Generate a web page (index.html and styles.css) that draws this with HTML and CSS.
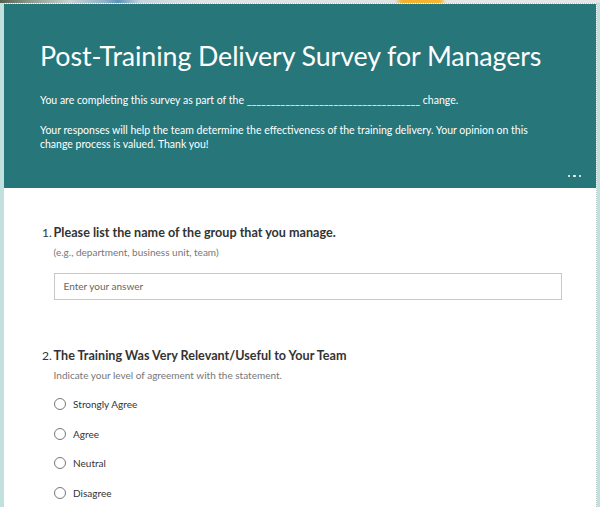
FILE: index.html
```html
<!DOCTYPE html>
<html>
<head>
<meta charset="utf-8">
<link rel="stylesheet" href="styles.css">
</head>
<body>
<div class="page">
  <div class="card">
    <header class="header">
      <h1 class="title">Post-Training Delivery Survey for Managers</h1>
      <p class="intro first">You are completing this survey as part of the ____________________________________ change.</p>
      <p class="intro">Your responses will help the team determine the effectiveness of the training delivery. Your opinion on this change process is valued. Thank you!</p>
      <div class="more"><span></span><span></span><span></span></div>
    </header>
    <main class="body">
      <section class="question q1">
        <div class="qtitle"><span class="num">1.</span><span class="qtext">Please list the name of the group that you manage.</span></div>
        <div class="qdesc">(e.g., department, business unit, team)</div>
        <div class="input">Enter your answer</div>
      </section>
      <section class="question q2">
        <div class="qtitle"><span class="num">2.</span><span class="qtext">The Training Was Very Relevant/Useful to Your Team</span></div>
        <div class="qdesc">Indicate your level of agreement with the statement.</div>
        <div class="options">
          <div class="option"><span class="radio"></span><span>Strongly Agree</span></div>
          <div class="option"><span class="radio"></span><span>Agree</span></div>
          <div class="option"><span class="radio"></span><span>Neutral</span></div>
          <div class="option"><span class="radio"></span><span>Disagree</span></div>
        </div>
      </section>
    </main>
  </div>
</div>
</body>
</html>
```
FILE: styles.css
```css
html, body {
  margin: 0;
  padding: 0;
}
body {
  width: 600px;
  height: 507px;
  overflow: hidden;
  background: #c1e0de;
  font-family: "Lato", "Noto Sans", sans-serif;
}
.page {
  height: 507px;
  box-sizing: border-box;
  overflow: hidden;
  padding-top: 3px;
  background:
    linear-gradient(to right, #56604e 0px, #8d9a8a 30px, #c9d3d2 70px, #8fb2c8 105px, #5f93b8 118px, #c7d5dc 140px, #e1e5e6 200px, #dfe3e3 395px, #f3b02c 402px, #f6b733 440px, #e4e7e6 446px, #e4e7e6 600px) top / 100% 3px no-repeat,
    #c1e0de;
}
.card {
  margin: 0 3px 0 4px;
  height: 504px;
  background: #ffffff;
  border-top: 1px dotted rgba(150, 175, 175, 0.7);
  border-right: 1px dotted rgba(150, 175, 175, 0.7);
  box-sizing: border-box;
}
.header {
  background: #27767a;
  color: #ffffff;
  height: 184px;
  box-sizing: border-box;
  padding: 34px 52px 0 36px;
  position: relative;
}
.title {
  margin: 0 0 18.8px 0;
  font-weight: 400;
  font-size: 26.8px;
  line-height: 36px;
  letter-spacing: -0.1px;
  white-space: nowrap;
}
.intro {
  margin: 0;
  font-size: 10.5px;
  line-height: 14.7px;
}
.intro.first {
  margin-bottom: 15px;
}
.more {
  position: absolute;
  right: 15px;
  bottom: 11px;
  display: flex;
  gap: 3px;
}
.more span {
  width: 2.5px;
  height: 2.5px;
  border-radius: 50%;
  background: #ffffff;
}
.body {
  padding: 37px 34px 0 38px;
}
.qtitle {
  display: flex;
  align-items: baseline;
  font-size: 12.6px;
  line-height: 16px;
  color: #333333;
}
.num {
  width: 11.6px;
  flex: none;
  font-size: 12px;
}
.qtext {
  font-weight: 700;
}
.qdesc {
  margin: 4.6px 0 0 11.6px;
  font-size: 10px;
  line-height: 13px;
  color: #777777;
}
.input {
  margin: 14.7px 0 0 11.6px;
  height: 27px;
  box-sizing: border-box;
  border: 1px solid #c8c8c8;
  padding: 0 9px;
  font-size: 10px;
  line-height: 25px;
  color: #666666;
}
.q2 {
  margin-top: 47.8px;
}
.options {
  margin: 14.4px 0 0 11.6px;
  display: flex;
  flex-direction: column;
  gap: 13.7px;
}
.option {
  display: flex;
  align-items: center;
  gap: 7.5px;
  height: 16px;
  font-size: 10px;
  line-height: 16px;
  color: #333333;
}
.radio {
  width: 12px;
  height: 12px;
  border: 1px solid #777777;
  border-radius: 50%;
  box-sizing: border-box;
  flex: none;
}
```
